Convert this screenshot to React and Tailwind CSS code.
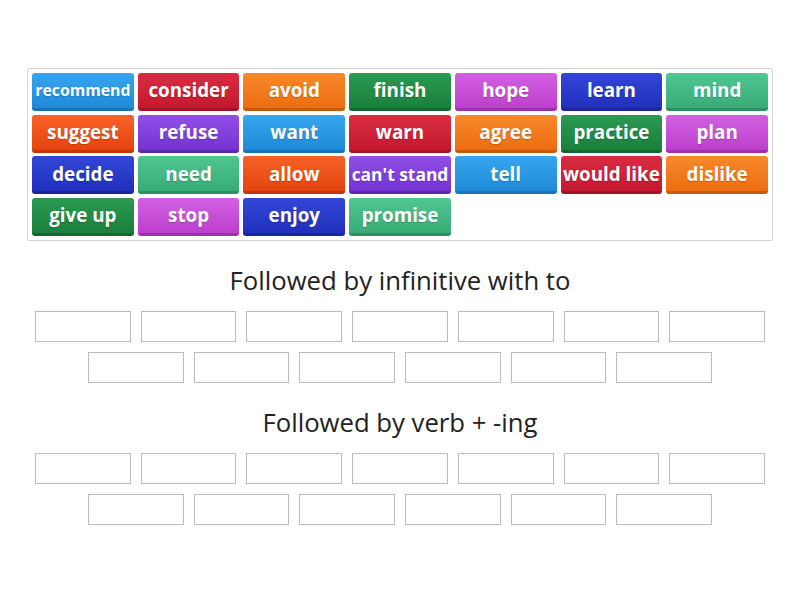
const palette = [
  'bg-gradient-to-b from-[#36a6ee] to-[#1f8ad9] border-[#1a74b8]',
  'bg-gradient-to-b from-[#d92c42] to-[#c4182e] border-[#a31225]',
  'bg-gradient-to-b from-[#f7892a] to-[#ec6d0e] border-[#c8580a]',
  'bg-gradient-to-b from-[#2a9a52] to-[#1a803c] border-[#136a31]',
  'bg-gradient-to-b from-[#d260e2] to-[#bd3fcd] border-[#9e30ad]',
  'bg-gradient-to-b from-[#3346d6] to-[#2030bd] border-[#18259c]',
  'bg-gradient-to-b from-[#50c692] to-[#38ac77] border-[#2c9062]',
  'bg-gradient-to-b from-[#f76228] to-[#e5430c] border-[#c23608]',
  'bg-gradient-to-b from-[#924ee6] to-[#7433d2] border-[#5f27b0]',
]

const words = [
  'recommend', 'consider', 'avoid', 'finish', 'hope', 'learn', 'mind',
  'suggest', 'refuse', 'want', 'warn', 'agree', 'practice', 'plan',
  'decide', 'need', 'allow', "can't stand", 'tell', 'would like', 'dislike',
  'give up', 'stop', 'enjoy', 'promise',
]

// palavras compridas encolhem para caber
const sizes = { recommend: 'text-[15.8px]', "can't stand": 'text-[17.4px]' }

function Tile({ word, i }) {
  return (
    <div
      className={`h-[38px] rounded-[3px] border-b-[3px] flex items-center justify-center text-white font-bold whitespace-nowrap [text-shadow:0_1px_1px_rgba(0,0,0,0.2)] ${palette[i % 9]} ${sizes[word] || 'text-[18.8px]'}`}
    >
      {word}
    </div>
  )
}

function Slots({ n }) {
  return (
    <div className="flex justify-center gap-[10px]">
      {Array.from({ length: n }).map((_, i) => (
        <div key={i} className="w-[95.7px] h-[31px] border border-[#bcbcbc] bg-white" />
      ))}
    </div>
  )
}

function Group({ title }) {
  return (
    <div className="mt-[24px]">
      <h2 className="text-center text-[25.7px] leading-[32px] text-[#222]">{title}</h2>
      <div className="mt-[14px] flex flex-col gap-[10px]">
        <Slots n={7} />
        <Slots n={6} />
      </div>
    </div>
  )
}

export default function App() {
  return (
    <div className="w-[800px] h-[600px] bg-white pt-[68px] font-['Open_Sans',sans-serif]">
      {/* banco de palavras */}
      <div className="w-[746px] mx-auto border border-[#d2d2d2] rounded-[2px] p-[4px]">
        <div className="grid grid-cols-7 gap-x-[4px] gap-y-[3.7px]">
          {words.map((w, i) => (
            <Tile key={w} word={w} i={i} />
          ))}
        </div>
      </div>

      <Group title="Followed by infinitive with to" />
      <Group title="Followed by verb + -ing" />
    </div>
  )
}
